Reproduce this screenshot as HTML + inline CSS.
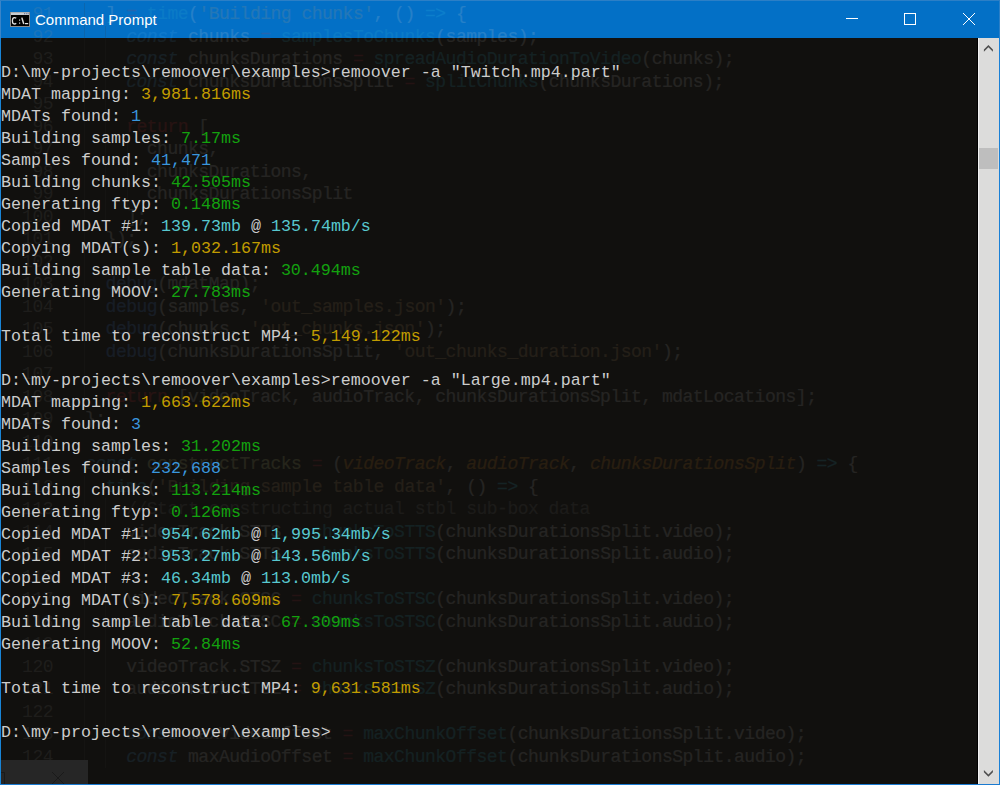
<!DOCTYPE html>
<html><head><meta charset="utf-8">
<style>
html,body{margin:0;padding:0;width:1000px;height:785px;overflow:hidden;background:#11100e;}
#win{position:absolute;left:0;top:0;width:1000px;height:785px;background:#11100e;overflow:hidden;}
#title{position:absolute;left:0;top:0;width:1000px;height:38px;background:#0370c6;}
#bl{position:absolute;left:0;top:0;width:1px;height:785px;background:linear-gradient(#3a84c8 0,#3a84c8 38px,#1884d6 38px);}
#br{position:absolute;left:999px;top:0;width:1px;height:785px;background:linear-gradient(#2c7fc6 0,#2c7fc6 38px,#1a80d6 38px);}
#bb{position:absolute;left:0;top:784px;width:1000px;height:1px;background:#1a7ad0;}
#bt{position:absolute;left:0;top:0;width:1000px;height:1px;background:#2c7fc6;}
#ttxt{position:absolute;left:35px;top:10px;font-family:"Liberation Sans",sans-serif;font-size:15px;line-height:20px;color:#fff;white-space:pre;}
.cw{position:absolute;left:0;width:977px;overflow:hidden;}
#cwT{top:0;height:38px;opacity:0.16;}
#cwC{top:38px;height:747px;opacity:0.10;}
.code{position:absolute;left:0;top:3.2px;font-family:"Liberation Mono",monospace;font-size:18px;letter-spacing:-0.5px;line-height:22.5px;color:#d4d4d4;white-space:pre;-webkit-text-stroke:0.2px currentColor;}
#cwC .code{top:-34.8px;}
.code div{position:relative;height:22.5px;padding-left:85px;}
.code b{font-weight:normal;position:absolute;left:0;width:53px;text-align:right;color:#909090;-webkit-text-stroke:0;}
.code i{font-style:normal;}
.code s{position:absolute;width:1px;height:22.5px;background:#383838;}
.code i.k{font-style:italic;color:#50aae6;}
.code i.r{color:#e6323c;}
.code i.f{color:#34b4d0;}
.code i.g{color:#5090f0;}
.code i.o{color:#c83040;}
.code i.a{color:#3cc8e6;}
.code i.d{color:#d8d890;}
.code i.p{font-style:italic;color:#f09628;}
.code i.s{color:#c8a070;}
.code i.c{color:#7a7a7a;}
.code i.u{color:#a0b8d0;}
#con{position:absolute;left:1px;top:40px;font-family:"Liberation Mono",monospace;font-size:16.667px;line-height:22px;color:#cccccc;white-space:pre;}
#con div{height:22px;}
.y{color:#c19c00}.b{color:#3a96dd}.g{color:#13a10e}.c{color:#58c8cf}
#sb{position:absolute;left:978px;top:38px;width:21px;height:746px;background:#dcdcdb;}
#thumb{position:absolute;left:979px;top:148px;width:19px;height:21px;background:#bebebe;}
#gbox{position:absolute;left:0;top:760px;width:88px;height:24px;background:#262626;}
#sbl{position:absolute;left:978px;top:38px;width:1px;height:746px;background:#f2f2f2;}
#sbk{position:absolute;left:977px;top:38px;width:1px;height:746px;background:#000;}

</style></head><body>
<div id="win">
<div id="title"></div>
<div class="cw" id="cwT"><div class="code"><div><b>91</b>  ] <i class="o">=</i> <i class="f">time</i>(<i class="s">'Building chunks'</i>, () <i class="a">=&gt;</i> {</div><div><b>92</b>    <i class="k">const</i> chunks <i class="o">=</i> <i class="f">samplesToChunks</i>(samples);</div><div><b>93</b>    <i class="k">const</i> chunksDurations <i class="o">=</i> <i class="f">spreadAudioDurationToVideo</i>(chunks);</div><div><b>94</b>    <i class="k">const</i> chunksDurationsSplit <i class="o">=</i> <i class="f">splitChunks</i>(chunksDurations);</div><div><b>95</b></div><div><b>96</b>    <i class="r">return</i> [</div><div><b>97</b>      chunks,</div><div><b>98</b>      chunksDurations,</div><div><b>99</b>      chunksDurationsSplit</div><div><b>100</b>    ];</div><div><b>101</b>  });</div><div><b>102</b></div><div><b>103</b>  <i class="g">debug</i>(mdatMap);</div><div><b>104</b>  <i class="g">debug</i>(samples, <i class="s">'out_samples.json'</i>);</div><div><b>105</b>  <i class="g">debug</i>(chunks, <i class="s">'out_chunks.json'</i>);</div><div><b>106</b>  <i class="g">debug</i>(chunksDurationsSplit, <i class="s">'out_chunks_duration.json'</i>);</div><div><b>107</b></div><div><b>108</b>  <i class="r">return</i> [videoTrack, audioTrack, chunksDurationsSplit, mdatLocations];</div><div><b>109</b>};</div><div><b>110</b></div><div><b>111</b><i class="k">const</i> <i class="d">constructTracks</i> <i class="o">=</i> (<i class="p">videoTrack</i>, <i class="p">audioTrack</i>, <i class="p">chunksDurationsSplit</i>) <i class="a">=&gt;</i> {</div><div><b>112</b>  <i class="f">time</i>(<i class="s">'Building sample table data'</i>, () <i class="a">=&gt;</i> {</div><div><b>113</b>    <i class="c">//Start constructing actual stbl sub-box data</i></div><div><b>114</b>    videoTrack.STTS <i class="o">=</i> <i class="f">chunksToSTTS</i>(chunksDurationsSplit.video);</div><div><b>115</b>    audioTrack.STTS <i class="o">=</i> <i class="f">chunksToSTTS</i>(chunksDurationsSplit.audio);</div><div><b>116</b></div><div><b>117</b>    videoTrack.STSC <i class="o">=</i> <i class="f">chunksToSTSC</i>(chunksDurationsSplit.video);</div><div><b>118</b>    audioTrack.STSC <i class="o">=</i> <i class="f">chunksToSTSC</i>(chunksDurationsSplit.audio);</div><div><b>119</b></div><div><b>120</b>    videoTrack.STSZ <i class="o">=</i> <i class="f">chunksToSTSZ</i>(chunksDurationsSplit.video);</div><div><b>121</b>    audioTrack.STSZ <i class="o">=</i> <i class="f">chunksToSTSZ</i>(chunksDurationsSplit.audio);</div><div><b>122</b></div><div><b>123</b>    <i class="k">const</i> maxVideoOffset <i class="o">=</i> <i class="f">maxChunkOffset</i>(chunksDurationsSplit.video);</div><div><b>124</b>    <i class="k">const</i> maxAudioOffset <i class="o">=</i> <i class="f">maxChunkOffset</i>(chunksDurationsSplit.audio);</div><div><b>125</b></div><s style="left:83.5px;top:0.00px"></s><s style="left:83.5px;top:22.50px"></s><s style="left:105.3px;top:22.50px"></s><s style="left:83.5px;top:45.00px"></s><s style="left:105.3px;top:45.00px"></s><s style="left:83.5px;top:67.50px"></s><s style="left:105.3px;top:67.50px"></s><s style="left:83.5px;top:90.00px"></s><s style="left:105.3px;top:90.00px"></s><s style="left:83.5px;top:112.50px"></s><s style="left:105.3px;top:112.50px"></s><s style="left:83.5px;top:135.00px"></s><s style="left:105.3px;top:135.00px"></s><s style="left:127.1px;top:135.00px"></s><s style="left:83.5px;top:157.50px"></s><s style="left:105.3px;top:157.50px"></s><s style="left:127.1px;top:157.50px"></s><s style="left:83.5px;top:180.00px"></s><s style="left:105.3px;top:180.00px"></s><s style="left:127.1px;top:180.00px"></s><s style="left:83.5px;top:202.50px"></s><s style="left:105.3px;top:202.50px"></s><s style="left:83.5px;top:225.00px"></s><s style="left:83.5px;top:247.50px"></s><s style="left:83.5px;top:270.00px"></s><s style="left:83.5px;top:292.50px"></s><s style="left:83.5px;top:315.00px"></s><s style="left:83.5px;top:337.50px"></s><s style="left:83.5px;top:360.00px"></s><s style="left:83.5px;top:382.50px"></s><s style="left:83.5px;top:472.50px"></s><s style="left:83.5px;top:495.00px"></s><s style="left:105.3px;top:495.00px"></s><s style="left:83.5px;top:517.50px"></s><s style="left:105.3px;top:517.50px"></s><s style="left:83.5px;top:540.00px"></s><s style="left:105.3px;top:540.00px"></s><s style="left:83.5px;top:562.50px"></s><s style="left:105.3px;top:562.50px"></s><s style="left:83.5px;top:585.00px"></s><s style="left:105.3px;top:585.00px"></s><s style="left:83.5px;top:607.50px"></s><s style="left:105.3px;top:607.50px"></s><s style="left:83.5px;top:630.00px"></s><s style="left:105.3px;top:630.00px"></s><s style="left:83.5px;top:652.50px"></s><s style="left:105.3px;top:652.50px"></s><s style="left:83.5px;top:675.00px"></s><s style="left:105.3px;top:675.00px"></s><s style="left:83.5px;top:697.50px"></s><s style="left:105.3px;top:697.50px"></s><s style="left:83.5px;top:720.00px"></s><s style="left:105.3px;top:720.00px"></s><s style="left:83.5px;top:742.50px"></s><s style="left:105.3px;top:742.50px"></s></div></div><div class="cw" id="cwC"><div class="code"><div><b>91</b>  ] <i class="o">=</i> <i class="f">time</i>(<i class="s">'Building chunks'</i>, () <i class="a">=&gt;</i> {</div><div><b>92</b>    <i class="k">const</i> chunks <i class="o">=</i> <i class="f">samplesToChunks</i>(samples);</div><div><b>93</b>    <i class="k">const</i> chunksDurations <i class="o">=</i> <i class="f">spreadAudioDurationToVideo</i>(chunks);</div><div><b>94</b>    <i class="k">const</i> chunksDurationsSplit <i class="o">=</i> <i class="f">splitChunks</i>(chunksDurations);</div><div><b>95</b></div><div><b>96</b>    <i class="r">return</i> [</div><div><b>97</b>      chunks,</div><div><b>98</b>      chunksDurations,</div><div><b>99</b>      chunksDurationsSplit</div><div><b>100</b>    ];</div><div><b>101</b>  });</div><div><b>102</b></div><div><b>103</b>  <i class="g">debug</i>(mdatMap);</div><div><b>104</b>  <i class="g">debug</i>(samples, <i class="s">'out_samples.json'</i>);</div><div><b>105</b>  <i class="g">debug</i>(chunks, <i class="s">'out_chunks.json'</i>);</div><div><b>106</b>  <i class="g">debug</i>(chunksDurationsSplit, <i class="s">'out_chunks_duration.json'</i>);</div><div><b>107</b></div><div><b>108</b>  <i class="r">return</i> [videoTrack, audioTrack, chunksDurationsSplit, mdatLocations];</div><div><b>109</b>};</div><div><b>110</b></div><div><b>111</b><i class="k">const</i> <i class="d">constructTracks</i> <i class="o">=</i> (<i class="p">videoTrack</i>, <i class="p">audioTrack</i>, <i class="p">chunksDurationsSplit</i>) <i class="a">=&gt;</i> {</div><div><b>112</b>  <i class="f">time</i>(<i class="s">'Building sample table data'</i>, () <i class="a">=&gt;</i> {</div><div><b>113</b>    <i class="c">//Start constructing actual stbl sub-box data</i></div><div><b>114</b>    videoTrack.STTS <i class="o">=</i> <i class="f">chunksToSTTS</i>(chunksDurationsSplit.video);</div><div><b>115</b>    audioTrack.STTS <i class="o">=</i> <i class="f">chunksToSTTS</i>(chunksDurationsSplit.audio);</div><div><b>116</b></div><div><b>117</b>    videoTrack.STSC <i class="o">=</i> <i class="f">chunksToSTSC</i>(chunksDurationsSplit.video);</div><div><b>118</b>    audioTrack.STSC <i class="o">=</i> <i class="f">chunksToSTSC</i>(chunksDurationsSplit.audio);</div><div><b>119</b></div><div><b>120</b>    videoTrack.STSZ <i class="o">=</i> <i class="f">chunksToSTSZ</i>(chunksDurationsSplit.video);</div><div><b>121</b>    audioTrack.STSZ <i class="o">=</i> <i class="f">chunksToSTSZ</i>(chunksDurationsSplit.audio);</div><div><b>122</b></div><div><b>123</b>    <i class="k">const</i> maxVideoOffset <i class="o">=</i> <i class="f">maxChunkOffset</i>(chunksDurationsSplit.video);</div><div><b>124</b>    <i class="k">const</i> maxAudioOffset <i class="o">=</i> <i class="f">maxChunkOffset</i>(chunksDurationsSplit.audio);</div><div><b>125</b></div><s style="left:83.5px;top:0.00px"></s><s style="left:83.5px;top:22.50px"></s><s style="left:105.3px;top:22.50px"></s><s style="left:83.5px;top:45.00px"></s><s style="left:105.3px;top:45.00px"></s><s style="left:83.5px;top:67.50px"></s><s style="left:105.3px;top:67.50px"></s><s style="left:83.5px;top:90.00px"></s><s style="left:105.3px;top:90.00px"></s><s style="left:83.5px;top:112.50px"></s><s style="left:105.3px;top:112.50px"></s><s style="left:83.5px;top:135.00px"></s><s style="left:105.3px;top:135.00px"></s><s style="left:127.1px;top:135.00px"></s><s style="left:83.5px;top:157.50px"></s><s style="left:105.3px;top:157.50px"></s><s style="left:127.1px;top:157.50px"></s><s style="left:83.5px;top:180.00px"></s><s style="left:105.3px;top:180.00px"></s><s style="left:127.1px;top:180.00px"></s><s style="left:83.5px;top:202.50px"></s><s style="left:105.3px;top:202.50px"></s><s style="left:83.5px;top:225.00px"></s><s style="left:83.5px;top:247.50px"></s><s style="left:83.5px;top:270.00px"></s><s style="left:83.5px;top:292.50px"></s><s style="left:83.5px;top:315.00px"></s><s style="left:83.5px;top:337.50px"></s><s style="left:83.5px;top:360.00px"></s><s style="left:83.5px;top:382.50px"></s><s style="left:83.5px;top:472.50px"></s><s style="left:83.5px;top:495.00px"></s><s style="left:105.3px;top:495.00px"></s><s style="left:83.5px;top:517.50px"></s><s style="left:105.3px;top:517.50px"></s><s style="left:83.5px;top:540.00px"></s><s style="left:105.3px;top:540.00px"></s><s style="left:83.5px;top:562.50px"></s><s style="left:105.3px;top:562.50px"></s><s style="left:83.5px;top:585.00px"></s><s style="left:105.3px;top:585.00px"></s><s style="left:83.5px;top:607.50px"></s><s style="left:105.3px;top:607.50px"></s><s style="left:83.5px;top:630.00px"></s><s style="left:105.3px;top:630.00px"></s><s style="left:83.5px;top:652.50px"></s><s style="left:105.3px;top:652.50px"></s><s style="left:83.5px;top:675.00px"></s><s style="left:105.3px;top:675.00px"></s><s style="left:83.5px;top:697.50px"></s><s style="left:105.3px;top:697.50px"></s><s style="left:83.5px;top:720.00px"></s><s style="left:105.3px;top:720.00px"></s><s style="left:83.5px;top:742.50px"></s><s style="left:105.3px;top:742.50px"></s></div></div>
<div id="ttxt">Command Prompt</div>
<div id="con"><div></div><div>D:\my-projects\remoover\examples&gt;remoover -a "Twitch.mp4.part"</div><div>MDAT mapping: <span class="y">3,981.816ms</span></div><div>MDATs found: <span class="b">1</span></div><div>Building samples: <span class="g">7.17ms</span></div><div>Samples found: <span class="b">41,471</span></div><div>Building chunks: <span class="g">42.505ms</span></div><div>Generating ftyp: <span class="g">0.148ms</span></div><div>Copied MDAT #1: <span class="c">139.73mb</span> @ <span class="c">135.74mb/s</span></div><div>Copying MDAT(s): <span class="y">1,032.167ms</span></div><div>Building sample table data: <span class="g">30.494ms</span></div><div>Generating MOOV: <span class="g">27.783ms</span></div><div></div><div>Total time to reconstruct MP4: <span class="y">5,149.122ms</span></div><div></div><div>D:\my-projects\remoover\examples&gt;remoover -a "Large.mp4.part"</div><div>MDAT mapping: <span class="y">1,663.622ms</span></div><div>MDATs found: <span class="b">3</span></div><div>Building samples: <span class="g">31.202ms</span></div><div>Samples found: <span class="b">232,688</span></div><div>Building chunks: <span class="g">113.214ms</span></div><div>Generating ftyp: <span class="g">0.126ms</span></div><div>Copied MDAT #1: <span class="c">954.62mb</span> @ <span class="c">1,995.34mb/s</span></div><div>Copied MDAT #2: <span class="c">953.27mb</span> @ <span class="c">143.56mb/s</span></div><div>Copied MDAT #3: <span class="c">46.34mb</span> @ <span class="c">113.0mb/s</span></div><div>Copying MDAT(s): <span class="y">7,578.609ms</span></div><div>Building sample table data: <span class="g">67.309ms</span></div><div>Generating MOOV: <span class="g">52.84ms</span></div><div></div><div>Total time to reconstruct MP4: <span class="y">9,631.581ms</span></div><div></div><div>D:\my-projects\remoover\examples&gt;</div></div>
<div id="sb"></div>
<div id="thumb"></div><div id="sbl"></div><div id="sbk"></div>
<svg id="icon" width="20" height="16" viewBox="0 0 20 16" style="position:absolute;left:10px;top:12px">
<rect x="0" y="0" width="20" height="15" fill="#8c8c8c"/>
<rect x="1" y="0.5" width="18" height="2.5" fill="#c9cdd2"/>
<rect x="14" y="1.2" width="1" height="1" fill="#5a6a90"/><rect x="15.8" y="1.2" width="1" height="1" fill="#5a6a90"/><rect x="17.6" y="1.2" width="1" height="1" fill="#5a6a90"/>
<rect x="1" y="3" width="18" height="11" fill="#000"/>
<path d="M6.2 6.3 Q5.5 5.6 4.3 5.6 Q2.4 5.6 2.4 8.8 Q2.4 12 4.3 12 Q5.5 12 6.2 11.3" stroke="#e0e0e0" stroke-width="1.3" fill="none"/>
<rect x="9" y="7.5" width="1.2" height="1.2" fill="#e0e0e0"/><rect x="9" y="10.5" width="1.2" height="1.2" fill="#e0e0e0"/>
<path d="M11.8 5.6 L13.8 12" stroke="#d8d8d8" stroke-width="1.5" fill="none"/>
<rect x="15" y="11" width="3.2" height="1.2" fill="#e8e8e8"/>
</svg>
<svg id="btns" width="140" height="38" viewBox="0 0 140 38" style="position:absolute;left:840px;top:0">
<rect x="6" y="18" width="12" height="1" fill="#fff"/>
<rect x="64.5" y="13.5" width="11" height="11" fill="none" stroke="#fff" stroke-width="1"/>
<path d="M123 13 L135 25 M135 13 L123 25" stroke="#fff" stroke-width="1" fill="none"/>
</svg>
<svg id="arrows" width="22" height="746" style="position:absolute;left:978px;top:38px">
<path d="M5.9 13.7 L5.9 11.5 L10.4 7.0 L14.9 11.5 L14.9 13.7 L10.4 9.2 Z" fill="#4f4f4f"/>
<path d="M5.9 732.1 L5.9 734.3 L10.4 738.8 L14.9 734.3 L14.9 732.1 L10.4 736.6 Z" fill="#4f4f4f"/>
</svg>
<div id="gbox"></div>
<svg id="gx" width="88" height="24" style="position:absolute;left:0;top:760px">
<path d="M52 12 L64 24 M64 12 L52 24" stroke="#1a1a1a" stroke-width="1" fill="none"/>
<path d="M0 12.5 H4.5 V24" stroke="#1a1a1a" stroke-width="1" fill="none"/>
</svg>

<div id="bl"></div><div id="br"></div><div id="bb"></div><div id="bt"></div>
</div>

</body></html>
